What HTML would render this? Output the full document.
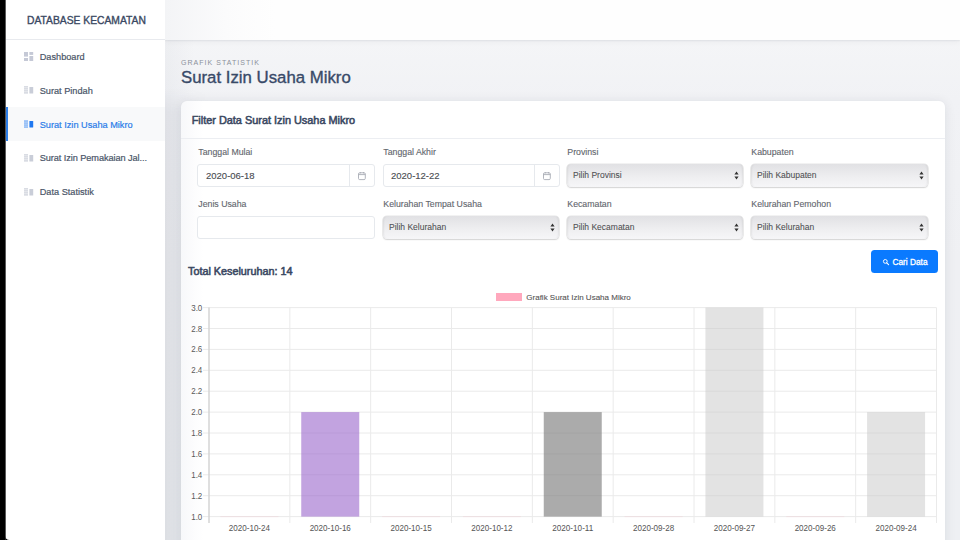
<!DOCTYPE html>
<html><head><meta charset="utf-8">
<style>
*{margin:0;padding:0;box-sizing:border-box}
html,body{width:960px;height:540px;overflow:hidden;background:linear-gradient(#f4f5f7 40px,#f1f2f5 100px,#eff0f3 260px,#eef0f3);font-family:"Liberation Sans",sans-serif}
.t{position:absolute;line-height:1;white-space:nowrap}
.b{position:absolute}
.inp{position:absolute;height:23px;border:1px solid #e6e9ed;border-radius:3px;background:#fff}
.sel{position:absolute;height:23px;border-radius:4px;background:linear-gradient(#e1e1e4,#eeeef0 55%,#f6f6f8);box-shadow:0 0 0 .6px rgba(0,0,0,.10),0 1px 1.5px rgba(0,0,0,.13), inset 2px 0 2px -1px rgba(0,0,0,.06), inset -2px 0 2px -1px rgba(0,0,0,.06)}
.str{-webkit-text-stroke:.2px currentColor}
.lb{-webkit-text-stroke:.12px currentColor}
</style></head><body>
<div class="b" style="left:0;top:0;width:6px;height:540px;background:linear-gradient(90deg,#000 5px,#5a5a5a 5px)"></div>
<div class="b" style="left:165px;top:0;width:795px;height:40px;background:linear-gradient(90deg,#f3f4f6,#fbfbfc 60px,#fefefe 110px);box-shadow:0 1px 1.5px rgba(20,30,50,.06),0 2px 6px rgba(20,30,50,.045)"></div>
<div class="b" style="left:165px;top:40px;width:30px;height:500px;background:linear-gradient(90deg,rgba(20,30,60,.03),rgba(20,30,60,0))"></div>
<div class="b" style="left:165px;top:88px;width:45px;height:452px;background:linear-gradient(90deg,rgba(20,30,60,.05),rgba(20,30,60,.035) 16px,rgba(20,30,60,.0) 45px);-webkit-mask-image:linear-gradient(transparent,#000 24px)"></div>
<div class="b" style="left:6px;top:0;width:159px;height:540px;background:#fff"></div>
<div class="b" style="left:6px;top:39px;width:159px;height:1px;background:#e8eaee"></div>
<div class="t" style="left:27px;top:16px;font-size:10.3px;color:#3a4862;font-weight:normal;-webkit-text-stroke:.35px #3a4862">DATABASE KECAMATAN</div>
<div class="b" style="left:6px;top:107px;width:159px;height:34px;background:#f8f9fa"></div>
<div class="b" style="left:6px;top:107px;width:2px;height:34px;background:#2f80ea"></div>
<svg class="b" style="left:24px;top:51px" width="10" height="11" viewBox="0 0 10 11"><g fill="#c5c9d6"><rect x="0" y="1" width="4" height="4.6"/><rect x="0" y="7" width="4" height="3"/><rect x="5.4" y="1" width="3.8" height="2.9"/><rect x="5.4" y="5" width="3.8" height="5"/></g></svg>
<svg class="b" style="left:24px;top:86px" width="10" height="10" viewBox="0 0 10 10"><g fill="#c9cdd8"><rect x="0" y="0.3" width="4" height="1.2"/><rect x="0" y="2.3" width="4" height="1.2"/><rect x="0" y="4.3" width="4" height="1.2"/><rect x="0" y="6.3" width="4" height="1.2"/></g><rect x="5.4" y="1" width="3.8" height="6.5" rx="0" fill="#c9cdd8"/></svg>
<svg class="b" style="left:24px;top:120px" width="10" height="10" viewBox="0 0 10 10"><g fill="#86b6f5"><rect x="0" y="0.3" width="4" height="1.5"/><rect x="0" y="2.3" width="4" height="1.5"/><rect x="0" y="4.3" width="4" height="1.5"/><rect x="0" y="6.3" width="4" height="1.5"/></g><rect x="5.4" y="1" width="3.8" height="6.5" rx="0.6" fill="#1f78f0"/></svg>
<svg class="b" style="left:24px;top:154px" width="10" height="10" viewBox="0 0 10 10"><g fill="#c9cdd8"><rect x="0" y="0.3" width="4" height="1.2"/><rect x="0" y="2.3" width="4" height="1.2"/><rect x="0" y="4.3" width="4" height="1.2"/><rect x="0" y="6.3" width="4" height="1.2"/></g><rect x="5.4" y="1" width="3.8" height="6.5" rx="0" fill="#c9cdd8"/></svg>
<svg class="b" style="left:24px;top:188px" width="10" height="10" viewBox="0 0 10 10"><g fill="#c9cdd8"><rect x="0" y="0.3" width="4" height="1.2"/><rect x="0" y="2.3" width="4" height="1.2"/><rect x="0" y="4.3" width="4" height="1.2"/><rect x="0" y="6.3" width="4" height="1.2"/></g><rect x="5.4" y="1" width="3.8" height="6.5" rx="0" fill="#c9cdd8"/></svg>
<div class="t str" style="left:39.7px;top:53px;font-size:9.2px;color:#4a5568;font-weight:normal;">Dashboard</div>
<div class="t str" style="left:39.7px;top:87px;font-size:9.2px;color:#4a5568;font-weight:normal;">Surat Pindah</div>
<div class="t str" style="left:39.7px;top:121px;font-size:9.2px;color:#2b7de9;font-weight:normal;">Surat Izin Usaha Mikro</div>
<div class="t str" style="left:39.7px;top:154px;font-size:9.2px;color:#4a5568;font-weight:normal;letter-spacing:-.075px">Surat Izin Pemakaian Jal...</div>
<div class="t str" style="left:39.7px;top:188px;font-size:9.2px;color:#4a5568;font-weight:normal;">Data Statistik</div>
<div class="t" style="left:181px;top:59px;font-size:7px;color:#8a909a;font-weight:normal;letter-spacing:1.04px">GRAFIK STATISTIK</div>
<div class="t" style="left:181px;top:70px;font-size:16.8px;color:#384a68;font-weight:normal;-webkit-text-stroke:.35px #384a68">Surat Izin Usaha Mikro</div>
<div class="b" style="left:181px;top:101px;width:764px;height:460px;background:linear-gradient(90deg,#f7f8fa,#fcfcfd 12px,#fff 22px);border-radius:6px;box-shadow:0 0 1px rgba(0,0,0,.07),0 1px 12px rgba(20,30,60,.09)"></div>
<div class="b" style="left:181px;top:138px;width:764px;height:1px;background:#eceef2"></div>
<div class="t" style="left:191.7px;top:115px;font-size:10.9px;color:#3a4862;font-weight:normal;-webkit-text-stroke:.55px #3a4862">Filter Data Surat Izin Usaha Mikro</div>
<div class="t lb" style="left:198.3px;top:148px;font-size:8.75px;color:#62666d;font-weight:normal;">Tanggal Mulai</div>
<div class="t lb" style="left:383.3px;top:148px;font-size:8.75px;color:#62666d;font-weight:normal;">Tanggal Akhir</div>
<div class="t lb" style="left:567.3px;top:148px;font-size:8.75px;color:#62666d;font-weight:normal;">Provinsi</div>
<div class="t lb" style="left:751.3px;top:148px;font-size:8.75px;color:#62666d;font-weight:normal;">Kabupaten</div>
<div class="t lb" style="left:198.3px;top:200px;font-size:8.75px;color:#62666d;font-weight:normal;">Jenis Usaha</div>
<div class="t lb" style="left:383.3px;top:200px;font-size:8.75px;color:#62666d;font-weight:normal;">Kelurahan Tempat Usaha</div>
<div class="t lb" style="left:567.3px;top:200px;font-size:8.75px;color:#62666d;font-weight:normal;">Kecamatan</div>
<div class="t lb" style="left:751.3px;top:200px;font-size:8.75px;color:#62666d;font-weight:normal;">Kelurahan Pemohon</div>
<div class="inp" style="left:197px;top:164px;width:178px"><div class="b" style="left:151px;top:0;width:1px;height:21px;background:#e6e9ed"></div></div>
<div class="t lb" style="left:206px;top:171px;font-size:9.5px;color:#4a4d52;font-weight:normal;">2020-06-18</div>
<svg class="b" style="left:357px;top:171px" width="10" height="10" viewBox="0 0 10 10"><rect x="1.5" y="1.8" width="6.8" height="6.8" rx="1.2" fill="none" stroke="#a9adb5" stroke-width=".9"/><path d="M1.5 3.6H8.3" stroke="#a9adb5" stroke-width=".9"/><path d="M3.3 1V2.4M6.5 1V2.4" stroke="#a9adb5" stroke-width=".9"/></svg>
<div class="inp" style="left:383px;top:164px;width:177px"><div class="b" style="left:150px;top:0;width:1px;height:21px;background:#e6e9ed"></div></div>
<div class="t lb" style="left:391px;top:171px;font-size:9.5px;color:#4a4d52;font-weight:normal;">2020-12-22</div>
<svg class="b" style="left:542px;top:171px" width="10" height="10" viewBox="0 0 10 10"><rect x="1.5" y="1.8" width="6.8" height="6.8" rx="1.2" fill="none" stroke="#a9adb5" stroke-width=".9"/><path d="M1.5 3.6H8.3" stroke="#a9adb5" stroke-width=".9"/><path d="M3.3 1V2.4M6.5 1V2.4" stroke="#a9adb5" stroke-width=".9"/></svg>
<div class="sel" style="left:567px;top:164px;width:176px"></div>
<div class="t" style="left:573px;top:171px;font-size:8.5px;color:#505054;font-weight:normal;-webkit-text-stroke:.08px #505054">Pilih Provinsi</div>
<svg class="b" style="left:734px;top:171px" width="5" height="9" viewBox="0 0 5 9"><path d="M2.5 .6L4.6 3.4H.4Z M2.5 8.4L4.6 5.6H.4Z" fill="#333"/></svg>
<div class="sel" style="left:751px;top:164px;width:177px"></div>
<div class="t" style="left:757px;top:171px;font-size:8.5px;color:#505054;font-weight:normal;-webkit-text-stroke:.08px #505054">Pilih Kabupaten</div>
<svg class="b" style="left:919px;top:171px" width="5" height="9" viewBox="0 0 5 9"><path d="M2.5 .6L4.6 3.4H.4Z M2.5 8.4L4.6 5.6H.4Z" fill="#333"/></svg>
<div class="inp" style="left:197px;top:216px;width:178px"></div>
<div class="sel" style="left:383px;top:216px;width:176px"></div>
<div class="t" style="left:389px;top:223px;font-size:8.5px;color:#505054;font-weight:normal;-webkit-text-stroke:.08px #505054">Pilih Kelurahan</div>
<svg class="b" style="left:550px;top:223px" width="5" height="9" viewBox="0 0 5 9"><path d="M2.5 .6L4.6 3.4H.4Z M2.5 8.4L4.6 5.6H.4Z" fill="#333"/></svg>
<div class="sel" style="left:567px;top:216px;width:176px"></div>
<div class="t" style="left:573px;top:223px;font-size:8.5px;color:#505054;font-weight:normal;-webkit-text-stroke:.08px #505054">Pilih Kecamatan</div>
<svg class="b" style="left:734px;top:223px" width="5" height="9" viewBox="0 0 5 9"><path d="M2.5 .6L4.6 3.4H.4Z M2.5 8.4L4.6 5.6H.4Z" fill="#333"/></svg>
<div class="sel" style="left:751px;top:216px;width:177px"></div>
<div class="t" style="left:757px;top:223px;font-size:8.5px;color:#505054;font-weight:normal;-webkit-text-stroke:.08px #505054">Pilih Kelurahan</div>
<svg class="b" style="left:919px;top:223px" width="5" height="9" viewBox="0 0 5 9"><path d="M2.5 .6L4.6 3.4H.4Z M2.5 8.4L4.6 5.6H.4Z" fill="#333"/></svg>
<div class="b" style="left:871px;top:250px;width:67px;height:23px;background:#0a7aff;border-radius:3.5px"></div>
<svg class="b" style="left:882px;top:258px" width="8" height="8" viewBox="0 0 8 8"><circle cx="3.3" cy="3.4" r="1.9" fill="none" stroke="#fff" stroke-width=".95"/><path d="M4.7 4.8L6.6 6.6" stroke="#fff" stroke-width="1.15" stroke-linecap="round"/></svg>
<div class="t" style="left:892.5px;top:258px;font-size:8.3px;color:#fff;font-weight:normal;-webkit-text-stroke:.3px #fff">Cari Data</div>
<div class="t" style="left:188px;top:266px;font-size:10.8px;color:#3a4862;font-weight:normal;-webkit-text-stroke:.55px #3a4862">Total Keseluruhan: 14</div>
<div class="b" style="left:496px;top:293px;width:26px;height:8px;background:#ffa8bd"></div>
<div class="t" style="left:526.3px;top:294px;font-size:8px;color:#555;font-weight:normal;-webkit-text-stroke:.1px #555">Grafik Surat Izin Usaha Mikro</div>
<svg class="b" style="left:0;top:0" width="960" height="540" viewBox="0 0 960 540"><g font-family="Liberation Sans, sans-serif"><line x1="203" y1="307.60" x2="936.5" y2="307.60" stroke="#eaeaea" stroke-width="1"/>
<line x1="203" y1="328.50" x2="936.5" y2="328.50" stroke="#eaeaea" stroke-width="1"/>
<line x1="203" y1="349.40" x2="936.5" y2="349.40" stroke="#eaeaea" stroke-width="1"/>
<line x1="203" y1="370.30" x2="936.5" y2="370.30" stroke="#eaeaea" stroke-width="1"/>
<line x1="203" y1="391.20" x2="936.5" y2="391.20" stroke="#eaeaea" stroke-width="1"/>
<line x1="203" y1="412.10" x2="936.5" y2="412.10" stroke="#eaeaea" stroke-width="1"/>
<line x1="203" y1="433.00" x2="936.5" y2="433.00" stroke="#eaeaea" stroke-width="1"/>
<line x1="203" y1="453.90" x2="936.5" y2="453.90" stroke="#eaeaea" stroke-width="1"/>
<line x1="203" y1="474.80" x2="936.5" y2="474.80" stroke="#eaeaea" stroke-width="1"/>
<line x1="203" y1="495.70" x2="936.5" y2="495.70" stroke="#eaeaea" stroke-width="1"/>
<line x1="203" y1="516.60" x2="936.5" y2="516.60" stroke="#eaeaea" stroke-width="1"/>
<line x1="289.83" y1="307.6" x2="289.83" y2="523" stroke="#eaeaea" stroke-width="1"/>
<line x1="370.67" y1="307.6" x2="370.67" y2="523" stroke="#eaeaea" stroke-width="1"/>
<line x1="451.50" y1="307.6" x2="451.50" y2="523" stroke="#eaeaea" stroke-width="1"/>
<line x1="532.33" y1="307.6" x2="532.33" y2="523" stroke="#eaeaea" stroke-width="1"/>
<line x1="613.17" y1="307.6" x2="613.17" y2="523" stroke="#eaeaea" stroke-width="1"/>
<line x1="694.00" y1="307.6" x2="694.00" y2="523" stroke="#eaeaea" stroke-width="1"/>
<line x1="774.83" y1="307.6" x2="774.83" y2="523" stroke="#eaeaea" stroke-width="1"/>
<line x1="855.67" y1="307.6" x2="855.67" y2="523" stroke="#eaeaea" stroke-width="1"/>
<line x1="936.50" y1="307.6" x2="936.50" y2="523" stroke="#eaeaea" stroke-width="1"/>
<line x1="209.0" y1="307.6" x2="209.0" y2="523" stroke="#d4d4d4" stroke-width="1.5"/>
<rect x="220.42" y="516.00" width="58" height="1.2" fill="#ff6384" fill-opacity=".08"/>
<rect x="382.08" y="516.00" width="58" height="1.2" fill="#ff6384" fill-opacity=".08"/>
<rect x="462.92" y="516.00" width="58" height="1.2" fill="#ff6384" fill-opacity=".08"/>
<rect x="624.58" y="516.00" width="58" height="1.2" fill="#ff6384" fill-opacity=".08"/>
<rect x="786.25" y="516.00" width="58" height="1.2" fill="#ff6384" fill-opacity=".08"/>
<rect x="301.25" y="412.10" width="58" height="104.50" fill="#9966cc" fill-opacity="0.6"/>
<rect x="543.75" y="412.10" width="58" height="104.50" fill="#808080" fill-opacity="0.66"/>
<rect x="705.42" y="307.60" width="58" height="209.00" fill="#c8c8c8" fill-opacity="0.5"/>
<rect x="867.08" y="412.10" width="58" height="104.50" fill="#c8c8c8" fill-opacity="0.5"/>
<text x="202.3" y="310.60" text-anchor="end" font-size="8.6" textLength="11.1" lengthAdjust="spacingAndGlyphs" fill="#5a5a5a">3.0</text>
<text x="202.3" y="331.50" text-anchor="end" font-size="8.6" textLength="11.1" lengthAdjust="spacingAndGlyphs" fill="#5a5a5a">2.8</text>
<text x="202.3" y="352.40" text-anchor="end" font-size="8.6" textLength="11.1" lengthAdjust="spacingAndGlyphs" fill="#5a5a5a">2.6</text>
<text x="202.3" y="373.30" text-anchor="end" font-size="8.6" textLength="11.1" lengthAdjust="spacingAndGlyphs" fill="#5a5a5a">2.4</text>
<text x="202.3" y="394.20" text-anchor="end" font-size="8.6" textLength="11.1" lengthAdjust="spacingAndGlyphs" fill="#5a5a5a">2.2</text>
<text x="202.3" y="415.10" text-anchor="end" font-size="8.6" textLength="11.1" lengthAdjust="spacingAndGlyphs" fill="#5a5a5a">2.0</text>
<text x="202.3" y="436.00" text-anchor="end" font-size="8.6" textLength="11.1" lengthAdjust="spacingAndGlyphs" fill="#5a5a5a">1.8</text>
<text x="202.3" y="456.90" text-anchor="end" font-size="8.6" textLength="11.1" lengthAdjust="spacingAndGlyphs" fill="#5a5a5a">1.6</text>
<text x="202.3" y="477.80" text-anchor="end" font-size="8.6" textLength="11.1" lengthAdjust="spacingAndGlyphs" fill="#5a5a5a">1.4</text>
<text x="202.3" y="498.70" text-anchor="end" font-size="8.6" textLength="11.1" lengthAdjust="spacingAndGlyphs" fill="#5a5a5a">1.2</text>
<text x="202.3" y="519.60" text-anchor="end" font-size="8.6" textLength="11.1" lengthAdjust="spacingAndGlyphs" fill="#5a5a5a">1.0</text>
<text x="228.82" y="531" font-size="8.6" textLength="41.2" lengthAdjust="spacingAndGlyphs" fill="#555">2020-10-24</text>
<text x="309.65" y="531" font-size="8.6" textLength="41.2" lengthAdjust="spacingAndGlyphs" fill="#555">2020-10-16</text>
<text x="390.48" y="531" font-size="8.6" textLength="41.2" lengthAdjust="spacingAndGlyphs" fill="#555">2020-10-15</text>
<text x="471.32" y="531" font-size="8.6" textLength="41.2" lengthAdjust="spacingAndGlyphs" fill="#555">2020-10-12</text>
<text x="552.15" y="531" font-size="8.6" textLength="41.2" lengthAdjust="spacingAndGlyphs" fill="#555">2020-10-11</text>
<text x="632.98" y="531" font-size="8.6" textLength="41.2" lengthAdjust="spacingAndGlyphs" fill="#555">2020-09-28</text>
<text x="713.82" y="531" font-size="8.6" textLength="41.2" lengthAdjust="spacingAndGlyphs" fill="#555">2020-09-27</text>
<text x="794.65" y="531" font-size="8.6" textLength="41.2" lengthAdjust="spacingAndGlyphs" fill="#555">2020-09-26</text>
<text x="875.48" y="531" font-size="8.6" textLength="41.2" lengthAdjust="spacingAndGlyphs" fill="#555">2020-09-24</text></g></svg>
<svg class="b" style="left:0;top:530px" width="20" height="10"><path d="M5.5 10V6Q5.5 10 9.5 10Z" fill="#000"/></svg>
</body></html>
